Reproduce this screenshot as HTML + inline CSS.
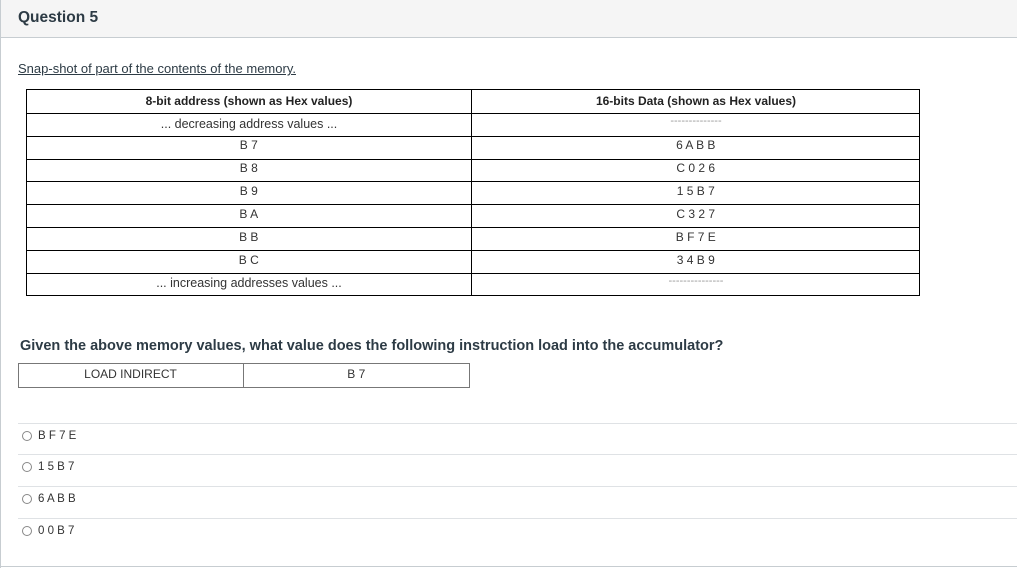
<!DOCTYPE html>
<html><head><style>
body{margin:0;width:1017px;height:572px;background:#fff;font-family:"Liberation Sans",sans-serif;color:#2d3b45;position:relative;overflow:hidden}
.a{position:absolute}
.hdr{left:0;top:0;width:1017px;height:38px;background:#f5f5f5;border-bottom:1px solid #c7cdd1;border-left:1px solid #c7cdd1;box-sizing:border-box}
.c{position:absolute;text-align:center;font-size:11px;color:#333}
.s{font-size:12px;letter-spacing:0.5px;word-spacing:-1px}
.h{font-weight:bold;font-size:12px;color:#222}
.hl{position:absolute;left:26px;width:894px;height:0;border-top:1px solid #000}
.opt{position:absolute;left:18px;width:1000px;border-top:1px solid #dfe2e5}
.o{position:absolute;left:22px;font-size:11.5px;color:#333;letter-spacing:0.5px;word-spacing:-1px}
.r{display:inline-block;width:10px;height:10px;border:1px solid #888;border-radius:50%;vertical-align:-2px;margin-right:6px;box-sizing:border-box}
</style></head><body>
<div class="a hdr"></div>
<div class="a" style="left:0;top:38px;width:1px;height:530px;background:#c7cdd1"></div>
<div class="a" style="left:0;top:566px;width:1017px;height:1px;background:#c7cdd1"></div>
<div class="a" style="left:18px;top:9px;font-size:15.5px;font-weight:bold;color:#2d3b45">Question 5</div>
<div class="a" style="left:18px;top:61px;font-size:13px;text-decoration:underline;color:#2d3b45">Snap-shot of part of the contents of the memory.</div>

<div class="a" style="left:26px;top:89px;width:894px;height:207px;border:1px solid #000;box-sizing:border-box"></div>
<div class="a" style="left:471px;top:89px;width:1px;height:207px;background:#000"></div>
<div class="hl" style="top:113px"></div>
<div class="hl" style="top:136px"></div>
<div class="hl" style="top:159px"></div>
<div class="hl" style="top:181px"></div>
<div class="hl" style="top:204px"></div>
<div class="hl" style="top:227px"></div>
<div class="hl" style="top:250px"></div>
<div class="hl" style="top:273px"></div>

<div class="c h" style="left:26px;width:446px;top:94px">8-bit address (shown as Hex values)</div>
<div class="c h" style="left:472px;width:448px;top:94px">16-bits Data (shown as Hex values)</div>
<div class="c" style="left:26px;width:446px;top:117px;font-size:12.5px">... decreasing address values ...</div>
<div class="c" style="left:472px;width:448px;top:115px;color:#999">--------------</div>
<div class="c s" style="left:26px;width:446px;top:138px">B 7</div>
<div class="c s" style="left:26px;width:446px;top:161px">B 8</div>
<div class="c s" style="left:26px;width:446px;top:184px">B 9</div>
<div class="c s" style="left:26px;width:446px;top:207px">B A</div>
<div class="c s" style="left:26px;width:446px;top:230px">B B</div>
<div class="c s" style="left:26px;width:446px;top:253px">B C</div>
<div class="c" style="left:26px;width:446px;top:276px;font-size:12.5px">... increasing addresses values ...</div>
<div class="c s" style="left:472px;width:448px;top:138px">6 A B B</div>
<div class="c s" style="left:472px;width:448px;top:161px">C 0 2 6</div>
<div class="c s" style="left:472px;width:448px;top:184px">1 5 B 7</div>
<div class="c s" style="left:472px;width:448px;top:207px">C 3 2 7</div>
<div class="c s" style="left:472px;width:448px;top:230px">B F 7 E</div>
<div class="c s" style="left:472px;width:448px;top:253px">3 4 B 9</div>
<div class="c" style="left:472px;width:448px;top:275px;color:#999">---------------</div>

<div class="a" style="left:20px;top:338px;font-size:14.5px;font-weight:bold;color:#2d3b45">Given the above memory values, what value does the following instruction load into the accumulator?</div>
<div class="a" style="left:18px;top:363px;width:452px;height:25px;border:1px solid #777;box-sizing:border-box"></div>
<div class="a" style="left:243px;top:363px;width:1px;height:25px;background:#777"></div>
<div class="c" style="left:18px;width:225px;top:367px;font-size:12px">LOAD INDIRECT</div>
<div class="c s" style="left:243px;width:227px;top:367px;font-size:12px">B 7</div>

<div class="opt" style="top:423px"></div>
<div class="opt" style="top:454px"></div>
<div class="opt" style="top:486px"></div>
<div class="opt" style="top:518px"></div>
<div class="o" style="top:430px"><span class="r"></span>B F 7 E</div>
<div class="o" style="top:461px"><span class="r"></span>1 5 B 7</div>
<div class="o" style="top:493px"><span class="r"></span>6 A B B</div>
<div class="o" style="top:525px"><span class="r"></span>0 0 B 7</div>
</body></html>
